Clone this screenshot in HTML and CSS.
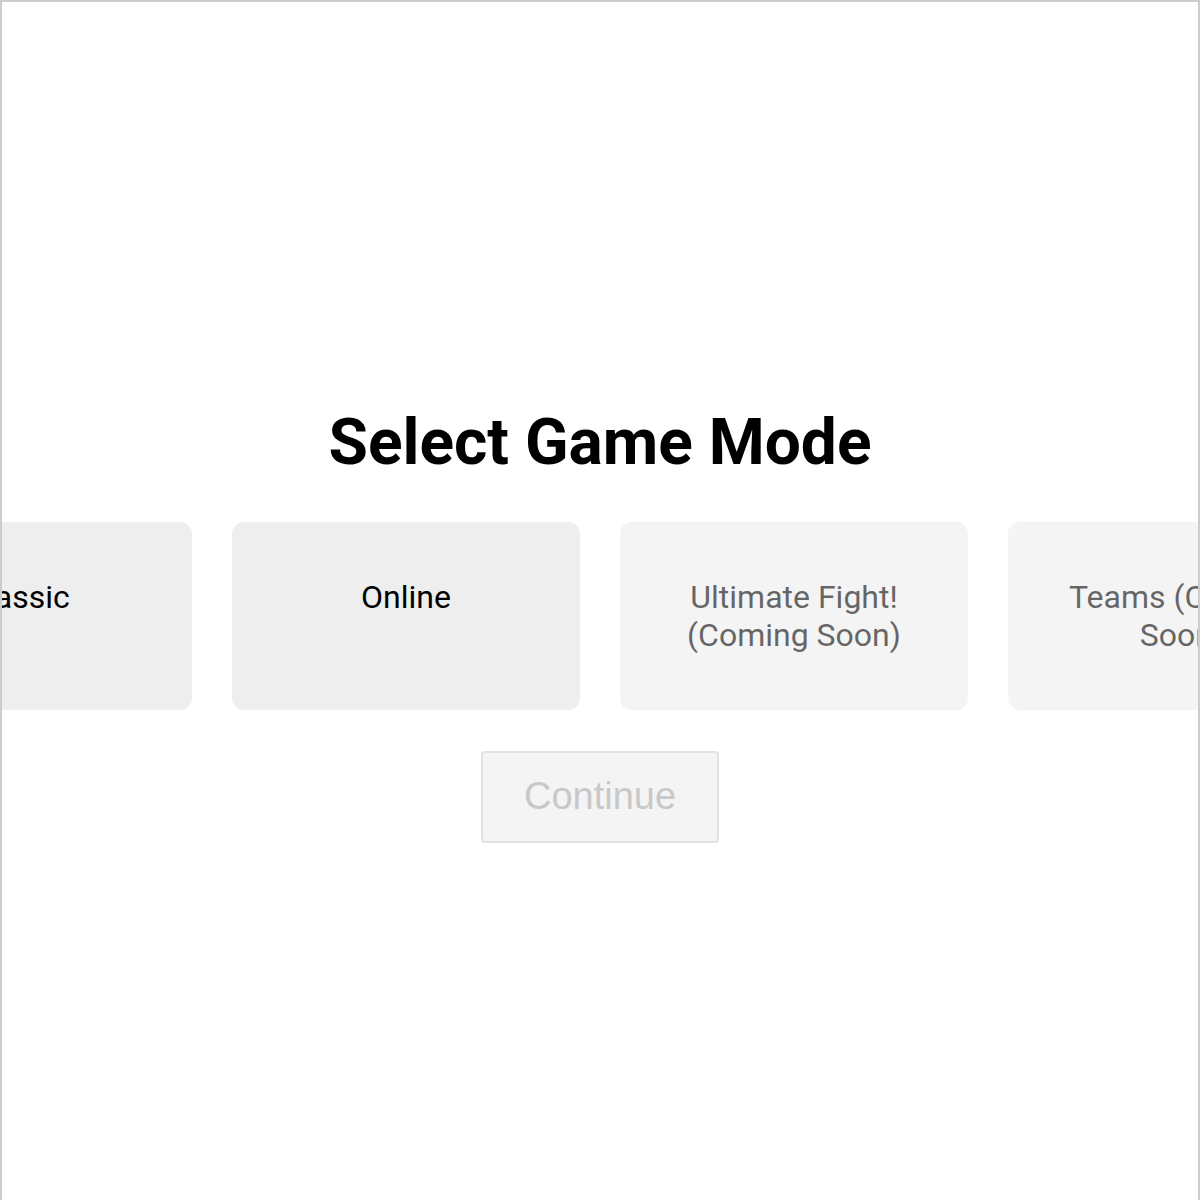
FILE: index.html
```html
<!DOCTYPE html>
<html lang="en">
<head>
<meta charset="utf-8">
<title>Select Game Mode</title>
<link rel="stylesheet" href="styles.css">
</head>
<body>
<div class="screen">
  <h1 class="title">Select Game Mode</h1>
  <div class="modes">
    <div class="mode">Classic</div>
    <div class="mode">Online</div>
    <div class="mode mode-soon">Ultimate Fight! (Coming Soon)</div>
    <div class="mode mode-soon">Teams (Coming Soon)</div>
  </div>
  <button class="continue" disabled>Continue</button>
</div>
</body>
</html>
```

FILE: styles.css
```css
html, body {
  margin: 0;
  padding: 0;
  background: #fff;
}

.screen {
  box-sizing: border-box;
  height: 1200px;
  border: 2px solid #cccccc;
  border-bottom: none;
  overflow: hidden;
  padding-top: 403px;
  display: flex;
  flex-direction: column;
  align-items: center;
  font-family: Roboto, "Liberation Sans", sans-serif;
}

.title {
  margin: 0 0 40px;
  font-size: 64px;
  line-height: 1.2;
  font-weight: 700;
  color: #000;
}

.modes {
  align-self: stretch;
  display: flex;
  justify-content: center;
  gap: 40px;
  margin-bottom: 41px;
}

.mode {
  flex: 0 0 auto;
  box-sizing: border-box;
  width: 348px;
  height: 188px;
  padding: 56px 24px 0;
  border-radius: 12px;
  background: #eeeeee;
  color: #000;
  font-size: 32px;
  line-height: 1.2;
  text-align: center;
}

.mode-soon {
  opacity: 0.6;
}

.continue {
  box-sizing: border-box;
  width: 238px;
  height: 92px;
  padding: 0;
  border: 2px solid #e2e2e2;
  border-radius: 4px;
  background: #f4f4f4;
  color: #c8c8c8;
  font-family: "Liberation Sans", Arial, sans-serif;
  font-size: 38px;
}
```
